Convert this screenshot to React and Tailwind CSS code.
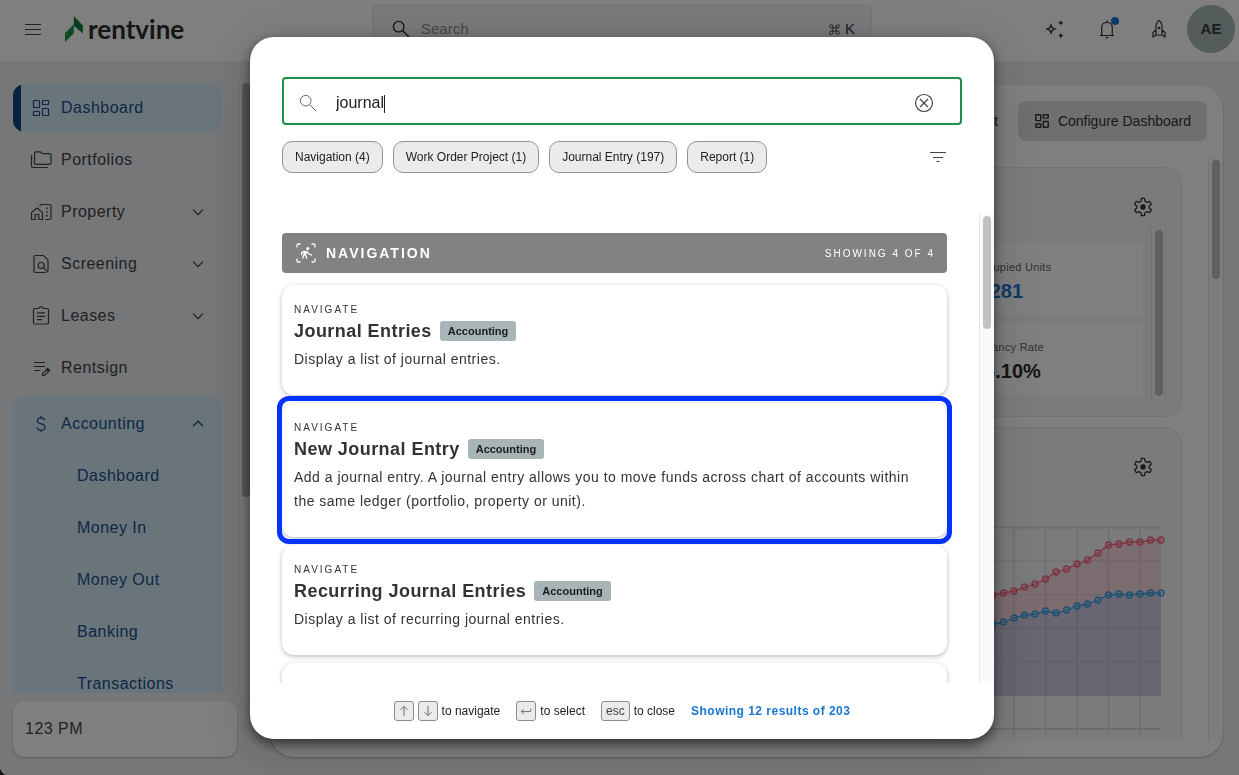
import React, { useState } from 'react';
import { Command } from 'lucide-react';

const Icon = ({ size = 24, strokeWidth = 1.2, className = '', children }) => (
  <svg
    width={size}
    height={size}
    viewBox="0 0 24 24"
    fill="none"
    stroke="currentColor"
    strokeWidth={strokeWidth}
    className={`shrink-0 ${className}`}
    aria-hidden="true"
  >
    {children}
  </svg>
);

const DashboardIcon = (props) => (
  <Icon {...props}>
    <rect x="4.5" y="4.5" width="6" height="7" rx="0.6" />
    <rect x="13.5" y="4.5" width="6" height="4" rx="0.6" />
    <rect x="4.5" y="15.5" width="6" height="4" rx="0.6" />
    <rect x="13.5" y="12.5" width="6" height="7" rx="0.6" />
  </Icon>
);

const FoldersIcon = () => (
  <Icon>
    <path d="M5.5 5.2q0-1.4 1.4-1.4h4.6l1.9 1.9h7.2q1.4 0 1.4 1.4v7.8q0 1.4-1.4 1.4H6.9q-1.4 0-1.4-1.4z" />
    <path d="M2.5 7.3v10.8q0 1.4 1.4 1.4h14.8" />
  </Icon>
);

const PropertyIcon = () => (
  <Icon>
    <path d="M2.5 19.5v-7l5.5-4.5 5.5 4.5v7H9.8v-5H6.2v5z" />
    <path d="M11 6.8V6q0-1.5 1.5-1.5h8q1.5 0 1.5 1.5v12q0 1.5-1.5 1.5h-4" />
    <path d="M17.2 8.2h1.6M17.2 12h1.6M17.2 15.8h1.6" strokeWidth="1.6" />
  </Icon>
);

const ScreeningIcon = () => (
  <Icon>
    <path d="M17 20.5H6.2q-1.2 0-1.2-1.2V4.7q0-1.2 1.2-1.2h8.3L19 8v11" />
    <circle cx="12.2" cy="13.5" r="3" />
    <path d="m14.4 15.7 4.6 4.6" />
  </Icon>
);

const LeasesIcon = () => (
  <Icon>
    <path d="M9.8 4.5H5.7q-1.2 0-1.2 1.2v13.1q0 1.2 1.2 1.2h12.6q1.2 0 1.2-1.2V5.7q0-1.2-1.2-1.2h-4.1" />
    <path d="M9.8 4.6q.4-1.7 2.2-1.7t2.2 1.7" />
    <path d="M8 8.9h8M8 12.3h8M8 15.7h5" />
  </Icon>
);

const RentsignIcon = () => (
  <Icon>
    <path d="M5 6.5h11M5 10.5h11M5 14.5h6.5" />
    <path d="M13.6 19.4v-1.9l5-5 1.9 1.9-5 5z" />
    <path d="m17.6 13.5 1-1 1.9 1.9-1 1z" fill="currentColor" />
  </Icon>
);

const DollarIcon = () => (
  <Icon>
    <path d="M15.7 8.2q-.7-2.3-3.6-2.3-3.7.1-3.7 2.9 0 2.3 3.7 3.1 3.9.8 3.9 3.3 0 2.9-3.9 2.9-3.5 0-4.1-2.8M12 3.8v2.1M12 18.1v2.1" />
  </Icon>
);

const ChevronIcon = ({ up }) => (
  <Icon strokeWidth={1.3}>
    <path d={up ? 'm7 14.2 5-5 5 5' : 'm7 9.6 5 5 5-5'} />
  </Icon>
);

const SearchIcon = ({ strokeWidth = 1.4, ...rest }) => (
  <Icon strokeWidth={strokeWidth} {...rest}>
    <circle cx="9.7" cy="9.7" r="5.3" />
    <path d="m13.5 13.5 6.5 6.5" />
  </Icon>
);

const GearIcon = () => (
  <Icon strokeWidth={1.3}>
    <path
      d="M10.500 3.400h3l.5 2.900 2 1.100 2.700-1.100 1.700 3-2.200 1.700v2l2.200 1.700-1.700 3-2.700-1.100-2 1.100-.5 2.900h-3l-.5-2.900-2-1.100-2.700 1.100-1.700-3L5.800 13v-2L3.600 9.300l1.700-3L8 7.400l2-1.100z"
      strokeLinejoin="round"
    />
    <circle cx="12" cy="12" r="2.7" fill="currentColor" stroke="none" />
  </Icon>
);

const navItems = [
  { label: 'Dashboard', icon: DashboardIcon, active: true },
  { label: 'Portfolios', icon: FoldersIcon },
  { label: 'Property', icon: PropertyIcon, expandable: true },
  { label: 'Screening', icon: ScreeningIcon, expandable: true },
  { label: 'Leases', icon: LeasesIcon, expandable: true },
  { label: 'Rentsign', icon: RentsignIcon },
];

const accountingItems = ['Dashboard', 'Money In', 'Money Out', 'Banking', 'Transactions'];

const filters = ['Navigation (4)', 'Work Order Project (1)', 'Journal Entry (197)', 'Report (1)'];

const results = [
  { title: 'Journal Entries', text: 'Display a list of journal entries.' },
  {
    title: 'New Journal Entry',
    text: 'Add a journal entry. A journal entry allows you to move funds across chart of accounts within the same ledger (portfolio, property or unit).',
    highlighted: true,
  },
  { title: 'Recurring Journal Entries', text: 'Display a list of recurring journal entries.' },
];

// newest value first, the charts are drawn from the right edge
const redSeries = [23, 23, 25, 25, 27, 28, 36, 43, 47, 52, 55, 62, 67, 70, 74, 76, 78, 80, 81, 83];
const blueSeries = [76, 76, 77, 78, 77, 78, 83, 87, 89, 93, 96, 94, 97, 98, 101, 105, 107, 109, 110, 112];

const Header = () => (
  <header className="h-[61px] shrink-0 bg-white grid grid-cols-[1fr_500px_1fr] pl-[9px] pr-1">
    <div className="flex items-center gap-5 pl-3 pb-1">
      <button aria-label="Toggle menu" className="text-[#444]">
        <Icon>
          <path d="M4 7.5h16M4 12.5h16M4 17.5h16" />
        </Icon>
      </button>
      <a href="#home" className="flex items-center gap-[5px] text-[#2b2e2e]">
        <svg width="18" height="26" viewBox="0 0 18 26" aria-hidden="true">
          <path d="M8.800 0 17.800 9.500v8L8.800 9.800z" fill="#147840" />
          <path d="M0 17l8.800-8.500v8.700L0 26z" fill="#169a44" />
        </svg>
        <span className="font-[Lato] font-bold text-[26px] leading-8">rentvine</span>
      </a>
    </div>
    <label className="mt-[5px] h-12 flex items-center gap-2 px-4 bg-[#f3f5f8] border border-[#e6e9ec] rounded">
      <SearchIcon className="text-[#333]" />
      <input
        type="text"
        placeholder="Search"
        className="flex-1 min-w-0 bg-transparent text-[15px] placeholder:text-[#8a8d90] outline-none"
      />
      <span className="flex items-center gap-1 text-[15px] text-[#333]">
        <Command size={13} strokeWidth={1.5} />
        K
      </span>
    </label>
    <div className="flex items-start justify-end gap-2 pt-[5px]">
      <div className="flex items-center gap-3 h-12 text-[#333]">
        <button aria-label="Assistant" className="size-10 grid place-items-center">
          <Icon strokeWidth={1.4}>
            <path d="m8 8 1.200 2.800L12 12l-2.800 1.200L8 16l-1.200-2.800L4 12l2.800-1.200z" />
            <path d="m17.800 3 .9 1.900 1.900.9-1.900.9-.9 1.900-.9-1.900-1.900-.9 1.900-.9zM17.800 15.800l.9 1.900 1.900.9-1.900.9-.9 1.900-.9-1.900-1.900-.9 1.900-.9z" fill="currentColor" stroke="none" />
          </Icon>
        </button>
        <button aria-label="Notifications" className="relative size-10 grid place-items-center">
          <Icon>
            <path d="M5 18.500h14M6.700 18.500v-8q0-5 5.300-5t5.300 5v8M12 5.500V3.300M10.800 20.600h2.400" />
          </Icon>
          <span className="absolute right-2 top-2 size-2 rounded-full bg-[#1976d2]" />
        </button>
        <button aria-label="What's new" className="size-10 grid place-items-center">
          <Icon>
            <path d="M9 18V10q0-4.500 3-6.500 3 2 3 6.500v8zM9 13l-3 2.500V20l3-2M15 13l3 2.500V20l-3-2" />
            <circle cx="12" cy="11" r="1.300" fill="currentColor" stroke="none" />
          </Icon>
        </button>
      </div>
      <button className="size-12 rounded-full bg-[#abb8b8] text-[#3a3f3f] text-[15px] font-bold">AE</button>
    </div>
  </header>
);

const NavItem = ({ item }) => {
  const ItemIcon = item.icon;
  return (
    <a
      href={`#${item.label.toLowerCase()}`}
      className={`h-12 shrink-0 flex items-center gap-2 pr-3 text-base tracking-[0.03em] ${
        item.active ? 'rounded-xl overflow-hidden bg-[#d3ebf6] text-[#1c4f8c]' : 'pl-4 text-[#444]'
      }`}
    >
      {item.active && <span className="w-2 h-12 bg-[#10427a]" />}
      <ItemIcon />
      <span className="flex-1">{item.label}</span>
      {item.expandable && <ChevronIcon />}
    </a>
  );
};

const Sidebar = () => (
  <aside className="w-[254px] shrink-0 flex flex-col gap-2 pb-[18px]">
    <div className="flex-1 min-h-0 flex mt-[19px]">
      <nav className="flex-1 min-h-0 overflow-hidden flex flex-col gap-1 pl-[13px] pr-[17px] pt-1">
        {navItems.map((item) => (
          <NavItem key={item.label} item={item} />
        ))}
        <div className="shrink-0 rounded-xl bg-[#d3ebf6] text-[#1c4f8c] pt-1 flex flex-col gap-1 tracking-[0.03em]">
          <button className="h-12 flex items-center gap-2 pl-4 pr-3 text-left tracking-[0.03em]">
            <DollarIcon />
            <span className="flex-1">Accounting</span>
            <ChevronIcon up />
          </button>
          {accountingItems.map((label) => (
            <a key={label} href="#accounting" className="h-12 flex items-center pl-16">
              {label}
            </a>
          ))}
        </div>
      </nav>
      <div className="w-[15px] bg-[#f0f1f3] border-l border-[#e4e4e4] pt-[3px] pl-[2px]">
        <div className="w-2 h-[414px] rounded-full bg-[#b0b0b0]" />
      </div>
    </div>
    <div className="ml-[13px] mr-[17px] h-14 flex items-center px-3 rounded-xl bg-white text-[#444] tracking-[0.03em] shadow-[0_1px_2px_rgba(60,100,130,0.4)]">
      123 PM
    </div>
  </aside>
);

const Metric = ({ label, value, blue }) => (
  <div className="col-start-4 h-[72px] flex flex-col justify-end px-[34px] pb-2 bg-white rounded">
    <span className="text-[11px] leading-4 tracking-wide text-[#5f5f5f]">{label}</span>
    <span className={`text-xl leading-8 font-bold ${blue ? 'text-[#1976d2]' : 'text-[#2b2b2b]'}`}>{value}</span>
  </div>
);

const OccupancyChart = () => {
  const width = 842;
  const toPoints = (series) => series.map((y, i) => [width - 4 - i * 10.5, y - 10]);
  const line = (points) => points.map((p) => p.join(',')).join(' ');
  const area = (points) => `${width - 4},168.500 ${line(points)} ${points[points.length - 1][0]},168.500`;
  const red = toPoints(redSeries);
  const blue = toPoints(blueSeries);

  return (
    <svg width={width} height="215" viewBox={`0 -1 ${width} 215`} className="shrink-0" aria-label="Occupancy trend">
      <g stroke="#d9dbde">
        {[0, 1, 2, 3, 4, 5, 6].map((i) => (
          <line key={i} x1="0" x2={width - 4} y1={i * 33.6 + 0.5} y2={i * 33.6 + 0.5} strokeWidth={i % 6 === 0 ? 2 : 1} />
        ))}
        {[2, 5, 8, 11, 14, 17].map((i) => (
          <line key={i} x1={width - 4 - i * 10.5} x2={width - 4 - i * 10.5} y1="0" y2="210" strokeWidth="1.300" />
        ))}
      </g>
      <polygon points={area(red)} fill="#ff6384" fillOpacity="0.2" />
      <polygon points={area(blue)} fill="#36a2eb" fillOpacity="0.2" />
      {[[red, '#ff6384'], [blue, '#36a2eb']].map(([points, color]) => (
        <g key={color} stroke={color} fill="none" strokeWidth="1.300">
          <polyline points={line(points)} />
          {points.map(([x, y]) => (
            <circle key={x} cx={x} cy={y} r="3" fill={color} fillOpacity="0.2" />
          ))}
        </g>
      ))}
    </svg>
  );
};

const Dashboard = () => (
  <main className="flex-1 min-w-0 flex flex-col mt-6 ml-4 mr-4 mb-[18px] rounded-3xl bg-white overflow-hidden shadow-[0_1px_2px_rgba(60,100,130,0.4)]">
    <div className="flex justify-end gap-5 pt-4 pb-4 pr-4 text-sm text-[#333]">
      <button>Export</button>
      <button className="h-10 flex items-center gap-[6px] pl-[14px] pr-4 rounded-lg bg-[#dce0e0]">
        <DashboardIcon size={20} strokeWidth={1.7} />
        Configure Dashboard
      </button>
    </div>
    <div className="flex-1 min-h-0 flex mb-4">
      <div className="flex-1 min-w-0 overflow-hidden flex flex-col gap-[10px] pl-4 pr-[26px] pt-[10px]">
        <section className="h-[250px] shrink-0 rounded-2xl border border-[#e3e7ea] bg-[#f4f6f8] pl-4 pr-[15px] pt-[27px]">
          <div className="flex justify-end pr-[11px]">
            <button aria-label="Configure portfolio summary" className="text-[#333]">
              <GearIcon />
            </button>
          </div>
          <div className="flex mt-2 h-[174px]">
            <div className="flex-1 grid grid-cols-4 gap-2 content-start pt-4">
              <Metric label="Occupied Units" value="1,281" blue />
              <Metric label="Vacancy Rate" value="13.10%" />
            </div>
            <div className="ml-2 w-[15px] bg-[#f8f8f8] border-x border-[#e4e4e4] pt-[3px] pl-[3px]">
              <div className="w-2 h-[166px] rounded-full bg-[#c1c1c1]" />
            </div>
          </div>
        </section>
        <section className="h-[420px] shrink-0 rounded-2xl border border-[#e3e7ea] bg-[#f4f6f8] pl-4 pr-4 pt-[27px]">
          <div className="flex justify-end pr-[10px]">
            <button aria-label="Configure occupancy" className="text-[#333]">
              <GearIcon />
            </button>
          </div>
          <div className="flex justify-end mt-[47px] overflow-hidden">
            <OccupancyChart />
          </div>
        </section>
      </div>
      <div className="w-[15px] bg-[#fafafa] border-l border-[#e4e4e4] pt-[3px] pl-[3px]">
        <div className="w-2 h-[119px] rounded-full bg-[#c1c1c1]" />
      </div>
    </div>
  </main>
);

const cardClass = 'block rounded-xl bg-white text-[#333] shadow-[0_2px_4px_rgba(0,0,0,0.2),0_0_6px_rgba(0,0,0,0.08)]';

const ResultCard = ({ result }) => (
  <li className="relative shrink-0">
    <a href="#result" className={`${cardClass} pl-3 pr-6 pt-[17px] pb-6`}>
      <span className="block text-[10px] leading-4 tracking-[2px]">NAVIGATE</span>
      <span className="flex items-center gap-2 h-[26px]">
        <span className="text-lg font-bold tracking-wide">{result.title}</span>
        <span className="h-5 flex items-center px-2 rounded-[3px] bg-[#a9b4b7] text-[11px] font-bold text-[#1c1c1c]">
          Accounting
        </span>
      </span>
      <span className="block mt-[3px] text-sm leading-6 tracking-[0.035em]">{result.text}</span>
    </a>
    {result.highlighted && (
      <span className="absolute -inset-x-[5px] -inset-y-[7px] z-10 rounded-xl border-[5px] border-[#0433ff] pointer-events-none" />
    )}
  </li>
);

const Key = ({ children }) => (
  <kbd className="h-5 min-w-5 flex items-center justify-center px-1 rounded-[3px] border border-[#8c8c8c] bg-[#ebebeb] font-[inherit] text-xs text-[#444]">
    {children}
  </kbd>
);

const KeyIcon = ({ d }) => (
  <kbd className="size-5 flex items-center justify-center rounded-[3px] border border-[#8c8c8c] bg-[#ebebeb] text-[#666]">
    <Icon size={14} strokeWidth={1.6}>
      <path d={d} />
    </Icon>
  </kbd>
);

const SearchDialog = () => {
  const [query, setQuery] = useState('journal');

  return (
    <div
      role="dialog"
      aria-label="Search"
      className="w-full max-w-[744px] flex flex-col rounded-3xl bg-white overflow-hidden shadow-[0_11px_15px_-7px_rgba(0,0,0,0.2),0_9px_46px_8px_rgba(0,0,0,0.12),0_4px_12px_rgba(0,0,0,0.5)]"
    >
      <div className="px-8 pt-10">
        <label className="relative h-12 flex items-center pl-3 pr-6 pt-1 rounded border-2 border-[#1e8e4a]">
          <SearchIcon strokeWidth={1} className="text-[#666]" />
          <input
            type="text"
            aria-label="Search everything"
            value={query}
            onChange={(e) => setQuery(e.target.value)}
            className="flex-1 min-w-0 ml-4 text-base leading-6 text-[#212121] caret-transparent outline-none"
          />
          {query === 'journal' && <span className="absolute left-[100px] top-4 w-px h-[18px] bg-[#212121]" />}
          <button aria-label="Clear search" onClick={() => setQuery('')} className="text-[#444]">
            <Icon>
              <circle cx="12" cy="12" r="8.500" />
              <path d="m8 8 8 8M16 8l-8 8" />
            </Icon>
          </button>
        </label>
        <div className="flex items-center gap-[10px] mt-4">
          {filters.map((label) => (
            <button
              key={label}
              className="h-8 px-3 rounded-[10px] border border-[#939393] bg-[#ebebeb] text-xs text-[#212121]"
            >
              {label}
            </button>
          ))}
          <button aria-label="Filter results" className="ml-auto mr-3 text-[#444]">
            <Icon>
              <path d="M4 7.500h16M7 12.500h10M10.500 16.500h3" />
            </Icon>
          </button>
        </div>
      </div>
      <div className="flex-1 min-h-0 flex mt-10">
        <div className="flex-1 min-w-0 overflow-hidden px-8 pt-5">
          <div className="h-10 flex items-center px-3 rounded bg-[#828282] text-white">
            <Icon strokeWidth={1.3}>
              <path d="M3 6.500V4.500Q3 3 4.500 3h2M17.500 3h2Q21 3 21 4.500v2M21 17.500v2q0 1.500-1.500 1.500h-2M6.500 21h-2Q3 21 3 19.500v-2" />
              <circle cx="13.800" cy="7.600" r="1.600" fill="currentColor" stroke="none" />
              <path d="M9.800 10.200 12 9.800l1.400.6.500 1.600-1.900 1-.2 1.600-2.600-.6z" fill="currentColor" stroke="none" />
              <path d="M10.500 10.200 7.600 11.600v2.600M13 10.800l1.600 2 3.400 1.400M9.900 13.800 8.600 17.600M11 13.800l1.400 1.400v2.600" />
            </Icon>
            <h2 className="ml-2 text-sm font-bold tracking-[2px]">NAVIGATION</h2>
            <span className="ml-auto text-[10px] tracking-[2px]">SHOWING 4 OF 4</span>
          </div>
          <ul className="mt-3 flex flex-col gap-2">
            {results.map((result) => (
              <ResultCard key={result.title} result={result} />
            ))}
            <li className={`${cardClass} shrink-0 h-[110px]`} />
          </ul>
        </div>
        <div className="w-[15px] bg-[#fafafa] border-l border-[#e8e8e8] pt-[3px] pl-[3px]">
          <div className="w-2 h-[113px] rounded-full bg-[#c1c1c1]" />
        </div>
      </div>
      <footer className="h-14 shrink-0 flex items-center justify-center gap-4 text-xs text-[#212121]">
        <div className="flex items-center gap-1">
          <KeyIcon d="M12 21V4M6 10l6-6 6 6" />
          <KeyIcon d="M12 3v17M6 14l6 6 6-6" />
          <span>to navigate</span>
        </div>
        <div className="flex items-center gap-1">
          <KeyIcon d="M20 8v5H4M8.500 8.500 4 13l4.500 4.500" />
          <span>to select</span>
        </div>
        <div className="flex items-center gap-1">
          <Key>esc</Key>
          <span>to close</span>
        </div>
        <strong className="tracking-[0.04em] text-[#1976d2]">Showing 12 results of 203</strong>
      </footer>
    </div>
  );
};

export default function App() {
  return (
    <div className="relative h-screen overflow-hidden flex flex-col bg-[#ebeef2] font-['Liberation_Sans',Arial,sans-serif] text-base">
      <Header />
      <div className="flex-1 min-h-0 flex">
        <Sidebar />
        <Dashboard />
      </div>
      <div className="fixed inset-0 z-20 flex justify-center bg-black/50 pt-[37px] pb-9 pl-[5px]">
        <SearchDialog />
      </div>
      <svg width="6" height="6" viewBox="0 0 6 6" className="absolute left-0 bottom-0 z-30" aria-hidden="true">
        <path d="M0 0q1.500 4 5.500 6H0z" fill="#111" />
      </svg>
    </div>
  );
}
